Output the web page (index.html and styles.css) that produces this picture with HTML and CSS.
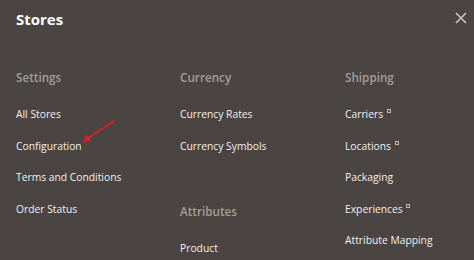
FILE: index.html
```
<!DOCTYPE html>
<html lang="en">
<head>
    <meta charset="UTF-8">
    <title>Stores</title>
    <link rel="stylesheet" href="styles.css">
</head>
<body>
    <div class="flyout">
        <div class="flyoutHeader">
            <h1>Stores</h1>
            <svg class="close" width="12" height="12" viewBox="0 0 12 12">
                <path d="M1 1 L11 11 M11 1 L1 11" stroke="#cbc6c3" stroke-width="1.6"/>
            </svg>
        </div>

        <div class="columns">
            <div class="column">
                <h3>Settings</h3>
                <ul>
                    <li>All Stores</li>
                    <li>Configuration</li>
                    <li>Terms and Conditions</li>
                    <li>Order Status</li>
                </ul>
            </div>
            <div class="column">
                <h3>Currency</h3>
                <ul>
                    <li>Currency Rates</li>
                    <li>Currency Symbols</li>
                </ul>
                <h3 class="nextGroup">Attributes</h3>
                <ul>
                    <li>Product</li>
                </ul>
            </div>
            <div class="column">
                <h3>Shipping</h3>
                <ul>
                    <li>Carriers <span class="ext"></span></li>
                    <li>Locations <span class="ext"></span></li>
                    <li>Packaging</li>
                    <li>Experiences <span class="ext"></span></li>
                    <li>Attribute Mapping</li>
                </ul>
            </div>
        </div>

        <svg class="arrow" width="50" height="40" viewBox="0 0 50 40">
            <line x1="43" y1="4" x2="17" y2="21" stroke="#dc1f2a" stroke-width="1.8" stroke-linecap="round"/>
            <polygon points="12,26 15.5,17.5 20.5,23.5" fill="#dc1f2a"/>
        </svg>
    </div>
</body>
</html>
```

FILE: styles.css
```
*{
    margin: 0;
    padding: 0;
}

body{
    background-color: #4a4542;
    font-family: "Open Sans", sans-serif;
    width: 474px;
    height: 260px;
    overflow: hidden;
}

.flyout{
    position: relative;
}

.flyoutHeader{
    display: flex;
    justify-content: space-between;
    align-items: center;
    padding: 8px 7px 8px 16px;
}

.flyoutHeader h1{
    color: #fff;
    font-size: 15px;
    font-weight: 700;
    line-height: 22px;
}

.close{
    display: block;
    margin-top: -3px;
}

.columns{
    display: grid;
    grid-template-columns: 164px 165px 1fr;
    padding: 29px 0 0 16px;
}

.column h3{
    color: #a39d99;
    font-size: 11.7px;
    font-weight: 600;
    line-height: 20px;
    margin-bottom: 12px;
}

.column h3.nextGroup{
    margin-top: 39px;
}

.column ul{
    list-style-type: none;
}

.column li{
    color: #f3efec;
    font-size: 10.3px;
    line-height: 31.6px;
}

.ext{
    display: inline-block;
    width: 2px;
    height: 2px;
    border: 1px solid #bdb8b4;
    vertical-align: 5px;
    margin-left: 1px;
}

.arrow{
    position: absolute;
    left: 71px;
    top: 117px;
}
```
